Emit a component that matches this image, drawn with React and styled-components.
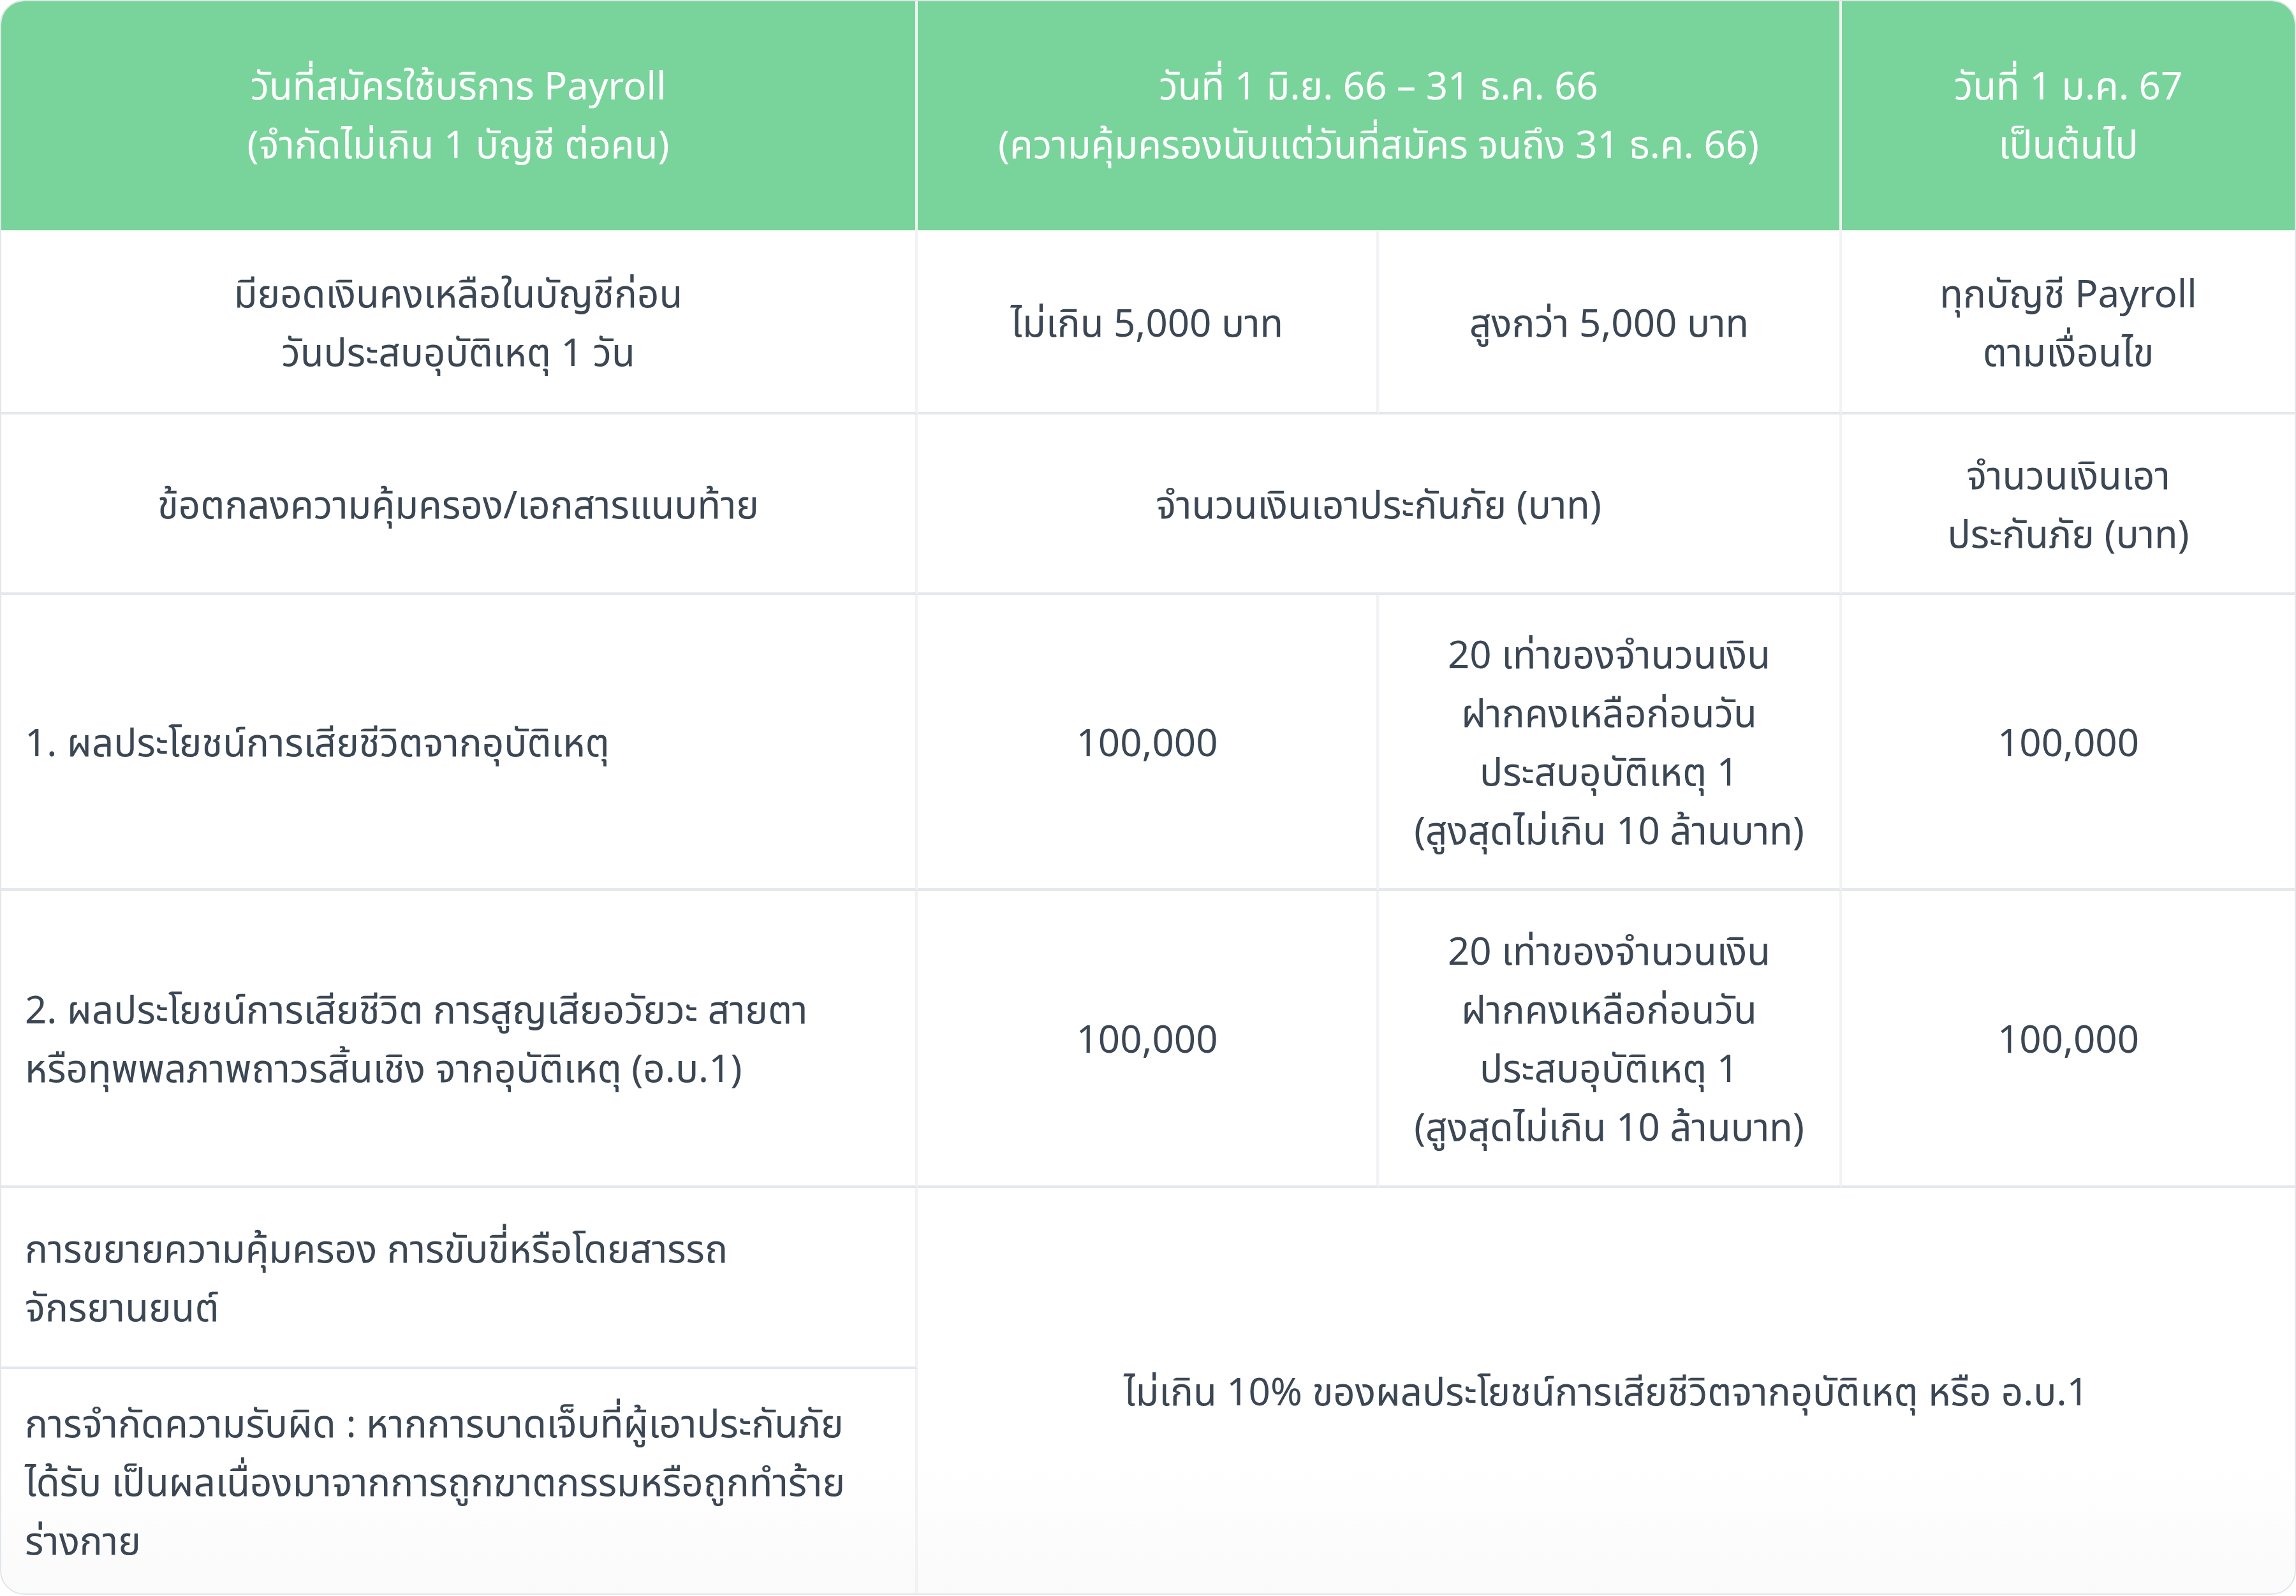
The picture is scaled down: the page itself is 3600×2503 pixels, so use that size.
import React from 'react';
import styled, { createGlobalStyle } from 'styled-components';

const GlobalStyle = createGlobalStyle`
    html, body {
        margin: 0;
        padding: 0;
        background: #fff;
    }
    body {
        font-family: "Noto Sans Thai", "Noto Sans", "DejaVu Sans", sans-serif;
    }
`;

const textColor = '#3b4754';
const green = '#78d49a';

const Wrapper = styled.div`
    width: 3600px;
    box-sizing: border-box;
    border: 2px solid #e2e5e9;
    border-radius: 38px;
    overflow: hidden;
    background: linear-gradient(180deg, #fff 92%, #fafafb 100%);
`;

const Table = styled.table`
    width: 100%;
    border-collapse: separate;
    border-spacing: 0;
    table-layout: fixed;
`;

const HeadCell = styled.th`
    background: ${green};
    color: #fff;
    font-weight: 400;
    font-size: 60px;
    line-height: 92px;
    height: 361px;
    padding: 4px 0 0;
    text-align: center;
    vertical-align: middle;
    white-space: nowrap;
    box-sizing: border-box;
    border-right: 4px solid #eef4f0;
    border-bottom: 2px solid #f2f7f4;
    &:last-child {
        border-right: none;
    }
`;

const Cell = styled.td`
    color: ${textColor};
    font-size: 60px;
    line-height: 92px;
    height: ${(p) => p.h}px;
    padding: 10px ${(p) => (p.left ? 37 : 0)}px 0;
    text-align: ${(p) => (p.left ? 'left' : 'center')};
    vertical-align: middle;
    white-space: nowrap;
    box-sizing: border-box;
    border-right: ${(p) => (p.last ? 'none' : '4px solid #f1f2f4')};
    border-bottom: ${(p) => (p.end ? 'none' : '4px solid #e4e7eb')};
`;

const benefitText = (
    <>
        20 เท่าของจำนวนเงิน<br />
        ฝากคงเหลือก่อนวัน<br />
        ประสบอุบัติเหตุ 1<br />
        (สูงสุดไม่เกิน 10 ล้านบาท)
    </>
);

export default function App() {
    return (
        <>
            <GlobalStyle />
            <Wrapper>
                <Table>
                    <colgroup>
                        <col style={{ width: 1437 }} />
                        <col style={{ width: 723 }} />
                        <col style={{ width: 726 }} />
                        <col />
                    </colgroup>
                    <thead>
                        <tr>
                            <HeadCell>
                                วันที่สมัครใช้บริการ Payroll<br />
                                (จำกัดไม่เกิน 1 บัญชี ต่อคน)
                            </HeadCell>
                            <HeadCell colSpan={2}>
                                วันที่ 1 มิ.ย. 66 – 31 ธ.ค. 66<br />
                                (ความคุ้มครองนับแต่วันที่สมัคร จนถึง 31 ธ.ค. 66)
                            </HeadCell>
                            <HeadCell>
                                วันที่ 1 ม.ค. 67<br />
                                เป็นต้นไป
                            </HeadCell>
                        </tr>
                    </thead>
                    <tbody>
                        <tr>
                            <Cell h={287}>
                                มียอดเงินคงเหลือในบัญชีก่อน<br />
                                วันประสบอุบัติเหตุ 1 วัน
                            </Cell>
                            <Cell h={287}>ไม่เกิน 5,000 บาท</Cell>
                            <Cell h={287}>สูงกว่า 5,000 บาท</Cell>
                            <Cell h={287} last>
                                ทุกบัญชี Payroll<br />
                                ตามเงื่อนไข
                            </Cell>
                        </tr>
                        <tr>
                            <Cell h={283}>ข้อตกลงความคุ้มครอง/เอกสารแนบท้าย</Cell>
                            <Cell h={283} colSpan={2}>จำนวนเงินเอาประกันภัย (บาท)</Cell>
                            <Cell h={283} last>
                                จำนวนเงินเอา<br />
                                ประกันภัย (บาท)
                            </Cell>
                        </tr>
                        <tr>
                            <Cell h={464} left>1. ผลประโยชน์การเสียชีวิตจากอุบัติเหตุ</Cell>
                            <Cell h={464}>100,000</Cell>
                            <Cell h={464}>{benefitText}</Cell>
                            <Cell h={464} last>100,000</Cell>
                        </tr>
                        <tr>
                            <Cell h={466} left>
                                2. ผลประโยชน์การเสียชีวิต การสูญเสียอวัยวะ สายตา<br />
                                หรือทุพพลภาพถาวรสิ้นเชิง จากอุบัติเหตุ (อ.บ.1)
                            </Cell>
                            <Cell h={466}>100,000</Cell>
                            <Cell h={466}>{benefitText}</Cell>
                            <Cell h={466} last>100,000</Cell>
                        </tr>
                        <tr>
                            <Cell h={284} left>
                                การขยายความคุ้มครอง การขับขี่หรือโดยสารรถ<br />
                                จักรยานยนต์
                            </Cell>
                            <Cell colSpan={3} rowSpan={2} last end>
                                ไม่เกิน 10% ของผลประโยชน์การเสียชีวิตจากอุบัติเหตุ หรือ อ.บ.1
                            </Cell>
                        </tr>
                        <tr>
                            <Cell h={352} left end>
                                การจำกัดความรับผิด : หากการบาดเจ็บที่ผู้เอาประกันภัย<br />
                                ได้รับ เป็นผลเนื่องมาจากการถูกฆาตกรรมหรือถูกทำร้าย<br />
                                ร่างกาย
                            </Cell>
                        </tr>
                    </tbody>
                </Table>
            </Wrapper>
        </>
    );
}
